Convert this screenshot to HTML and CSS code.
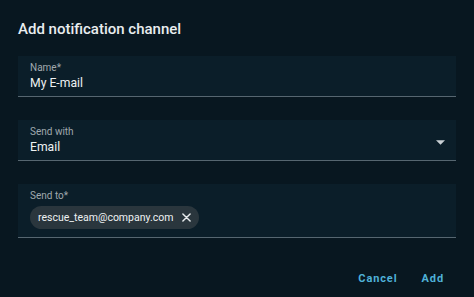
FILE: index.html
```html
<!DOCTYPE html>
<html>
<head>
<meta charset="utf-8">
<link rel="stylesheet" href="styles.css">
</head>
<body>
<div class="dialog">
  <h2 class="title">Add notification channel</h2>
  <div class="fields">
    <div class="field">
      <div class="label">Name*</div>
      <div class="value">My E-mail</div>
    </div>
    <div class="field select">
      <div class="col">
        <div class="label">Send with</div>
        <div class="value">Email</div>
      </div>
      <svg class="arrow" width="9" height="5" viewBox="0 0 10 5"><path d="M0 0 L10 0 L5 5 Z" fill="#c9d0d4"/></svg>
    </div>
    <div class="field chips">
      <div class="label">Send to*</div>
      <div class="chip">
        <span>rescue_team@company.com</span>
        <svg width="9" height="9" viewBox="0 0 10 10"><path d="M1 1 L9 9 M9 1 L1 9" stroke="#e8ecee" stroke-width="1.6" stroke-linecap="round"/></svg>
      </div>
    </div>
  </div>
  <div class="actions">
    <button class="btn">Cancel</button>
    <button class="btn">Add</button>
  </div>
</div>
</body>
</html>
```
FILE: styles.css
```css
html, body {
  margin: 0;
  padding: 0;
  background: #071520;
}
.dialog {
  width: 474px;
  height: 297px;
  box-sizing: border-box;
  padding: 19px 18px 0 18px;
  font-family: Roboto, "Liberation Sans", sans-serif;
  color: #e6eaec;
  background: #081720;
}
.title {
  margin: 0;
  font-size: 15px;
  font-weight: 500;
  line-height: 20px;
  color: #e9edef;
}
.fields {
  margin-top: 17px;
  display: flex;
  flex-direction: column;
  gap: 23px;
}
.field {
  background: #0b1e29;
  border-bottom: 1px solid #566670;
  padding: 6px 12px 0 12px;
  box-sizing: border-box;
  height: 41px;
}
.label {
  font-size: 10px;
  line-height: 12px;
  color: #a0a9ae;
}
.value {
  font-size: 12.2px;
  line-height: 16px;
  margin-top: 1px;
  color: #eef1f2;
}
.select {
  display: flex;
  align-items: center;
  justify-content: space-between;
  padding-right: 11px;
}
.select .col { align-self: flex-start; }
.arrow { margin-top: -1px; }
.chips {
  height: 54px;
}
.chip {
  margin-top: 4px;
  display: inline-flex;
  align-items: center;
  gap: 9px;
  height: 23px;
  padding: 0 8px 0 8px;
  border-radius: 12px;
  background: #2a363d;
  font-size: 10.5px;
  color: #eef1f2;
}
.actions {
  display: flex;
  justify-content: flex-end;
  gap: 12px;
  margin-top: 30px;
  padding-right: 6px;
}
.btn {
  background: none;
  border: none;
  padding: 4px 6px;
  font-family: Roboto, "Liberation Sans", sans-serif;
  font-size: 11px;
  font-weight: 700;
  letter-spacing: 0.9px;
  color: #4fb1d8;
}
```
